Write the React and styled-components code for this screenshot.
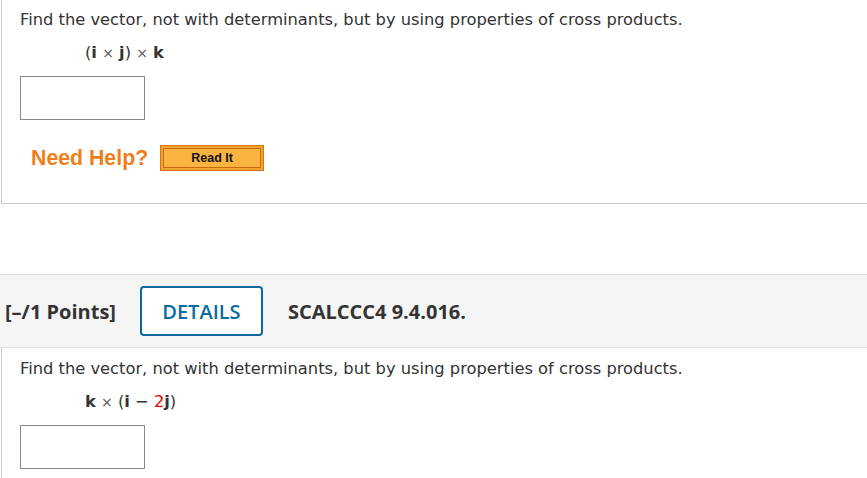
import React from 'react'
import styled, { createGlobalStyle } from 'styled-components'

const GlobalStyle = createGlobalStyle`
    html, body {
        margin: 0;
        padding: 0;
        background: #fff;
    }
    body {
        font-family: "DejaVu Sans", Verdana, sans-serif;
        color: #333;
        overflow: hidden;
    }
`

const App = () => {
    return (
        <Page>
            <GlobalStyle />
            <Panel first top={9}>
                <Prompt>Find the vector, not with determinants, but by using properties of cross products.</Prompt>
                <Expression>
                    (<B>i</B> <Times>×</Times> <B>j</B>) <Times>×</Times> <B>k</B>
                </Expression>
                <AnswerBox />
                <HelpRow>
                    <NeedHelp>Need Help?</NeedHelp>
                    <ReadIt><span>Read It</span></ReadIt>
                </HelpRow>
            </Panel>
            <Spacer />
            <Header>
                <Points>[–/1 Points]</Points>
                <DetailsButton>DETAILS</DetailsButton>
                <Code>SCALCCC4 9.4.016.</Code>
            </Header>
            <Panel top={10}>
                <Prompt>Find the vector, not with determinants, but by using properties of cross products.</Prompt>
                <Expression>
                    <B>k</B> <Times>×</Times> (<B>i</B> <Minus>−</Minus> <Red>2</Red><B>j</B>)
                </Expression>
                <AnswerBox />
            </Panel>
        </Page>
    )
}

const Page = styled.div`
    width: 867px;
    height: 478px;
    overflow: hidden;
    display: flex;
    flex-direction: column;
`
const Panel = styled.div`
    margin-left: 1px;
    border-left: 1px solid #ccc;
    padding: ${props => props.top}px 0 0 18px;
    box-sizing: border-box;
    ${props => props.first
        ? "border-bottom: 1px solid #ccc; height: 204px; flex: none;"
        : "flex: 1;"}
`
const Prompt = styled.div`
    font-size: 16.3px;
    line-height: 22px;
    height: 22px;
    white-space: nowrap;
`
const Expression = styled.div`
    font-size: 16.3px;
    line-height: 22px;
    margin: 11px 0 0 65px;
`
const B = styled.b`
    font-weight: bold;
`
const Times = styled.span`
    font-size: 14px;
    color: #555;
`
const Minus = styled.span``
const Red = styled.span`
    color: #e00;
`
const AnswerBox = styled.div`
    width: 123px;
    height: 42px;
    margin-top: 12px;
    border: 1px solid #888;
    background: #fff;
`
const HelpRow = styled.div`
    display: flex;
    align-items: center;
    margin: 25px 0 0 11px;
`
const NeedHelp = styled.span`
    font-family: "Liberation Sans", Arial, sans-serif;
    font-weight: bold;
    font-size: 21.3px;
    color: #ee7f1a;
    margin-right: 12px;
`
const ReadIt = styled.div`
    width: 104px;
    height: 26px;
    box-sizing: border-box;
    border: 1px solid #d47414;
    background: #f5a330;
    padding: 2px;
    span {
        display: flex;
        align-items: center;
        justify-content: center;
        height: 100%;
        box-sizing: border-box;
        border: 1px solid #c66a10;
        background: #fbb440;
        font-family: "Liberation Sans", Arial, sans-serif;
        font-weight: bold;
        font-size: 12.5px;
        color: #111;
    }
`
const Spacer = styled.div`
    height: 70px;
    flex: none;
`
const Header = styled.div`
    display: flex;
    align-items: center;
    flex: none;
    height: 72px;
    background: #f5f5f5;
    border-top: 1px solid #ddd;
    border-bottom: 1px solid #ddd;
    font-family: "Open Sans", sans-serif;
    font-weight: bold;
    font-size: 20px;
    color: #333;
    padding-left: 5px;
`
const Points = styled.span`
    margin-right: 24px;
`
const DetailsButton = styled.div`
    width: 123px;
    height: 50px;
    box-sizing: border-box;
    border: 2px solid #0b6aa2;
    border-radius: 4px;
    background: #fff;
    color: #0b6aa2;
    font-weight: 600;
    font-size: 20px;
    display: flex;
    align-items: center;
    justify-content: center;
    margin-right: 25px;
`
const Code = styled.span``

export default App
